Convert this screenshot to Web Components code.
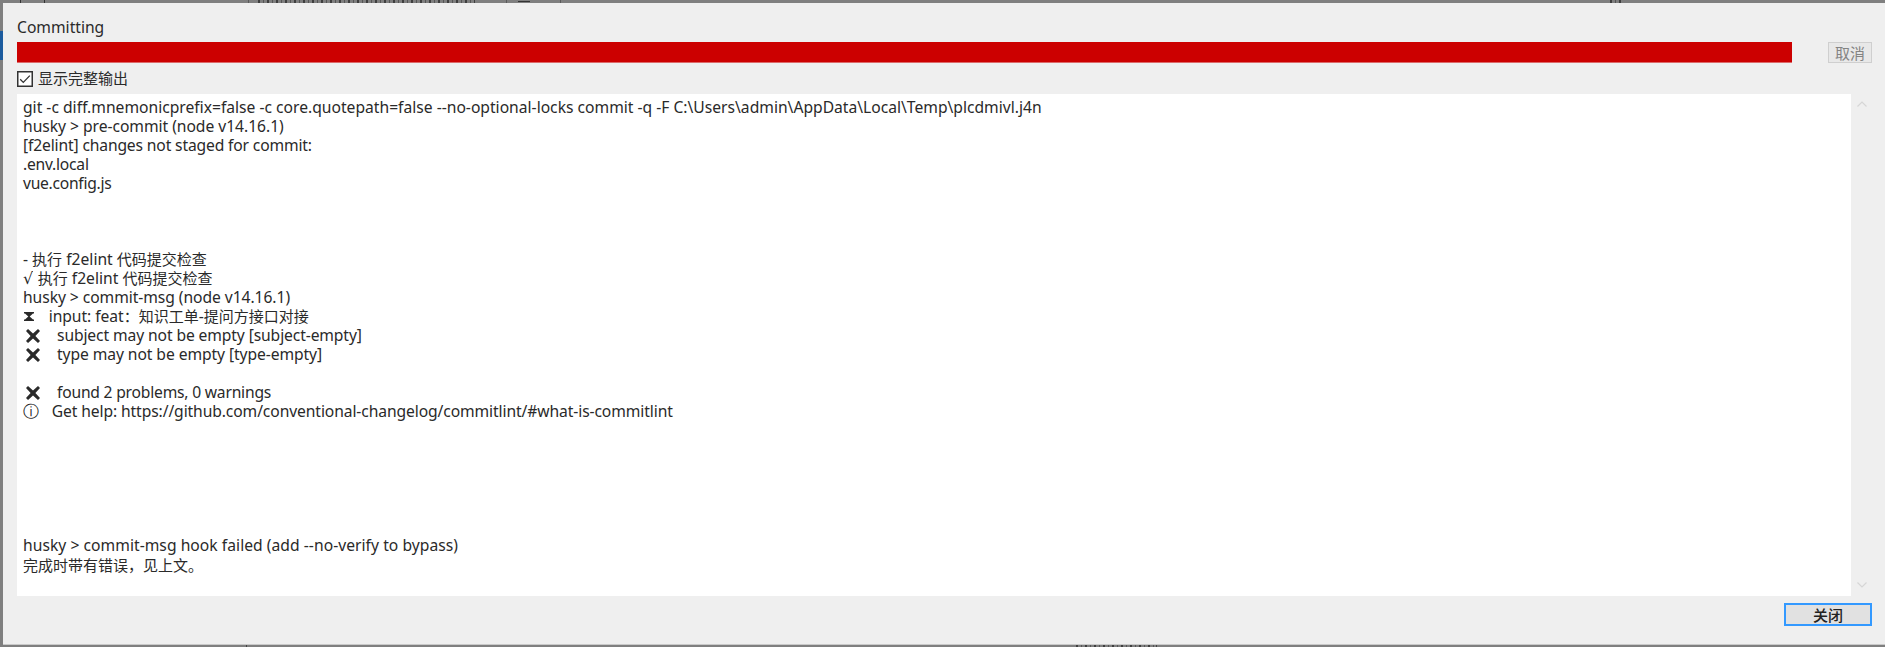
<!DOCTYPE html>
<html lang="zh"><head><meta charset="utf-8"><title>Committing</title>
<style>
html,body{margin:0;height:647px;width:1885px;overflow:hidden;background:#7f7f7f}
body{font-family:"Noto Sans","Noto Sans CJK SC",sans-serif;color:#2a2a2a;box-sizing:border-box;padding:3px 0 0 3px}
</style></head><body>
<app-backdrop></app-backdrop>
<commit-dialog>
  <span slot="title">Committing</span>
  <dlg-button slot="cancel" disabled>取消</dlg-button>
  <dlg-check slot="check"><zh-t>显示完整输出</zh-t></dlg-check>
  <log-view slot="log">
    <log-line>git -c diff.mnemonicprefix=false -c core.quotepath=false --no-optional-locks commit -q -F C:\Users\admin\AppData\Local\Temp\plcdmivl.j4n</log-line>
    <log-line ls="-.035">husky &gt; pre-commit (node v14.16.1)</log-line>
    <log-line ls="-.15">[f2elint] changes not staged for commit:</log-line>
    <log-line ls="-.23">.env.local</log-line>
    <log-line ls="-.28">vue.config.js</log-line>
    <log-line></log-line><log-line></log-line><log-line></log-line>
    <log-line>- <zh-t>执行</zh-t> f2elint <zh-t>代码提交检查</zh-t></log-line>
    <log-line><log-sym w="14.7" s="16" clip>√</log-sym><zh-t>执行</zh-t> f2elint <zh-t>代码提交检查</zh-t></log-line>
    <log-line ls="-.06">husky &gt; commit-msg (node v14.16.1)</log-line>
    <log-line ls="-.05"><log-ico kind="hourglass"></log-ico>input: feat<zh-t>：知识工单</zh-t>-<zh-t>提问方接口对接</zh-t></log-line>
    <log-line ls="-.11"><log-ico kind="cross"></log-ico>subject may not be empty [subject-empty]</log-line>
    <log-line ls="-.08"><log-ico kind="cross"></log-ico>type may not be empty [type-empty]</log-line>
    <log-line></log-line>
    <log-line ls="-.21"><log-ico kind="cross"></log-ico>found 2 problems, 0 warnings</log-line>
    <log-line ls="-.1"><log-sym w="28.7" s="16">ⓘ</log-sym>Get help: https://github.com/conventional-changelog/commitlint/#what-is-commitlint</log-line>
    <log-line></log-line><log-line></log-line><log-line></log-line><log-line></log-line><log-line></log-line><log-line style="height:20px"></log-line>
    <log-line ls=".036">husky &gt; commit-msg hook failed (add --no-verify to bypass)</log-line>
    <log-line style="height:20px;line-height:21px"><zh-t>完成时带有错误，见上文。</zh-t></log-line>
  </log-view>
  <dlg-button slot="close" primary>关闭</dlg-button>
</commit-dialog>
<script>
function def(name, css, html, init){
  customElements.define(name, class extends HTMLElement{
    constructor(){super();const r=this.attachShadow({mode:'open'});r.innerHTML='<style>'+css+'</style>'+(typeof html==='string'?html:'');if(typeof html==='function')r.innerHTML+=html(this);}
    connectedCallback(){if(init)init(this);}
  });
}
def('app-backdrop',`
  :host{display:block;position:absolute;inset:0;overflow:hidden;pointer-events:none}
  i{position:absolute;display:block}
  .txt{background:repeating-linear-gradient(90deg,#3f3f3f 0 2px,#7f7f7f 2px 5px,#555 5px 6px,#7f7f7f 6px 9px)}
  .ball{left:1880px;top:513px;width:42px;height:42px;border-radius:50%;background:#12a05c;border:3px solid #f2f2f2;box-sizing:border-box;box-shadow:0 0 6px 2px rgba(0,0,0,.28)}
`,`
  <i style="left:0;top:31px;width:3px;height:29px;background:#1c5b9e"></i>
  <i style="left:20px;top:0;width:1px;height:3px;background:#333"></i>
  <i style="left:44px;top:0;width:1px;height:3px;background:#333"></i>
  <i style="left:248px;top:0;width:1px;height:3px;background:#5a5a5a"></i>
  <i style="left:506px;top:0;width:1px;height:3px;background:#5a5a5a"></i>
  <i style="left:560px;top:0;width:1px;height:3px;background:#5a5a5a"></i>
  <i class="txt" style="left:258px;top:0;width:217px;height:3px"></i>
  <i style="left:518px;top:1px;width:12px;height:1px;background:#333"></i>
  <i class="txt" style="left:1610px;top:0;width:12px;height:3px"></i>
  <i style="left:246px;top:645px;width:1px;height:2px;background:#444"></i>
  <i class="txt" style="left:1076px;top:645px;width:78px;height:2px"></i>
  <i style="left:1156px;top:645px;width:1px;height:2px;background:#444"></i>
  <i class="ball"></i>
`);
def('commit-dialog',`
  :host{display:flex;flex-direction:column;position:relative;box-sizing:border-box;width:1882px;height:642px;background:#efefef;border-bottom:1px solid #c9c9c9;padding:0 13px 0 14px;font:15.65px/19px "Noto Sans","Noto Sans CJK SC",sans-serif;color:#2a2a2a}
  .title{height:39px;display:flex;align-items:flex-end;padding-bottom:5px;box-sizing:border-box}
  .prog{display:flex;gap:36px;height:21px}
  .bar{flex:1;background:#cc0000;border-bottom:1px solid #dc6a6a;box-sizing:border-box}
  .check{margin-top:8px;height:16px;display:flex}
  .log{margin-top:7px;margin-right:21px;height:502px;background:#fff;position:relative;display:block}
  .sb{position:absolute;right:-21px;top:0;bottom:0;width:21px}
  .sb svg{position:absolute;left:6px;width:10px;height:6px}
  .foot{display:flex;justify-content:flex-end;margin-top:7px}
`,`
  <div class="title"><slot name="title"></slot></div>
  <div class="prog"><div class="bar"></div><slot name="cancel"></slot></div>
  <div class="check"><slot name="check"></slot></div>
  <div class="log"><slot name="log"></slot>
    <div class="sb">
      <svg style="top:7px" viewBox="0 0 10 6"><path d="M.5 5.5 5 1l4.5 4.5" fill="none" stroke="#d6d6d6" stroke-width="1.2"/></svg>
      <svg style="bottom:8px" viewBox="0 0 10 6"><path d="M.5.5 5 5 9.5.5" fill="none" stroke="#d6d6d6" stroke-width="1.2"/></svg>
    </div>
  </div>
  <div class="foot"><slot name="close"></slot></div>
`);
def('dlg-button',`
  :host{display:flex;align-items:center;justify-content:center;box-sizing:border-box;width:44px;height:21px;background:#e8e8e8;border:1px solid #cfcfcf;color:#838383;font:15px/19px "Noto Sans CJK SC","Noto Sans",sans-serif}
  :host([primary]){width:88px;height:23px;background:#e1e1e1;border:2px solid #3399ff;color:#222;font-weight:500}
`,`<slot></slot>`);
def('dlg-check',`
  :host{display:flex;align-items:center;gap:5px;height:16px;line-height:14px}
  svg{width:16px;height:16px;flex:none;display:block}
  .l{display:block;height:16px;margin-top:-1px}
`,`<svg viewBox="0 0 16 16"><rect x=".75" y=".75" width="14.5" height="14.5" fill="#fff" stroke="#333" stroke-width="1.5"/><path d="M3.2 8.2 6.3 11.4 12.8 4.6" fill="none" stroke="#333" stroke-width="1.3"/></svg><span class="l"><slot></slot></span>`);
def('log-view',`:host{display:block;padding:4px 6px 0}`,`<slot></slot>`);
def('log-line',`:host{display:block;height:19px;line-height:19px;white-space:nowrap}`,`<slot></slot>`,
  el=>{const v=el.getAttribute('ls');if(v)el.style.letterSpacing=v+'px';});
def('zh-t',`:host{display:inline;font-family:"Noto Sans CJK SC",sans-serif;font-size:15px;line-height:0;letter-spacing:0}`,`<slot></slot>`);
def('log-sym',`:host{display:inline-block;font-family:"DejaVu Sans",sans-serif;line-height:19px;height:19px;vertical-align:top;box-sizing:border-box;color:#222;letter-spacing:0}
  :host([clip]) .c{display:block;width:10px;overflow:hidden}`,`<span class="c"><slot></slot></span>`,
  el=>{el.style.width=el.getAttribute('w')+'px';el.style.fontSize=el.getAttribute('s')+'px';});
const ICONS={
  cross:'<svg width="14" height="14" viewBox="0 0 14 14" style="margin-left:3px"><path d="M2 0 7 4.6 12 0l2 2-4.6 5L14 12l-2 2-5-4.6L2 14l-2-2 4.6-5L0 2z" fill="#2a2a2a"/></svg>',
  hourglass:'<svg width="10" height="9" viewBox="0 0 10 9" style="margin-left:1px"><path d="M0 0h10v1.5H9L5.7 4.5 9 7.5h1V9H0V7.5h1l3.3-3L1 1.5H0z" fill="#2a2a2a"/></svg>'
};
def('log-ico',`:host{display:inline-flex;align-items:center;height:19px;vertical-align:top}
  :host([kind=cross]){width:34px}
  :host([kind=hourglass]){width:25.7px}
  svg{display:block;flex:none}`,el=>ICONS[el.getAttribute('kind')]||'');
</script>
</body></html>
